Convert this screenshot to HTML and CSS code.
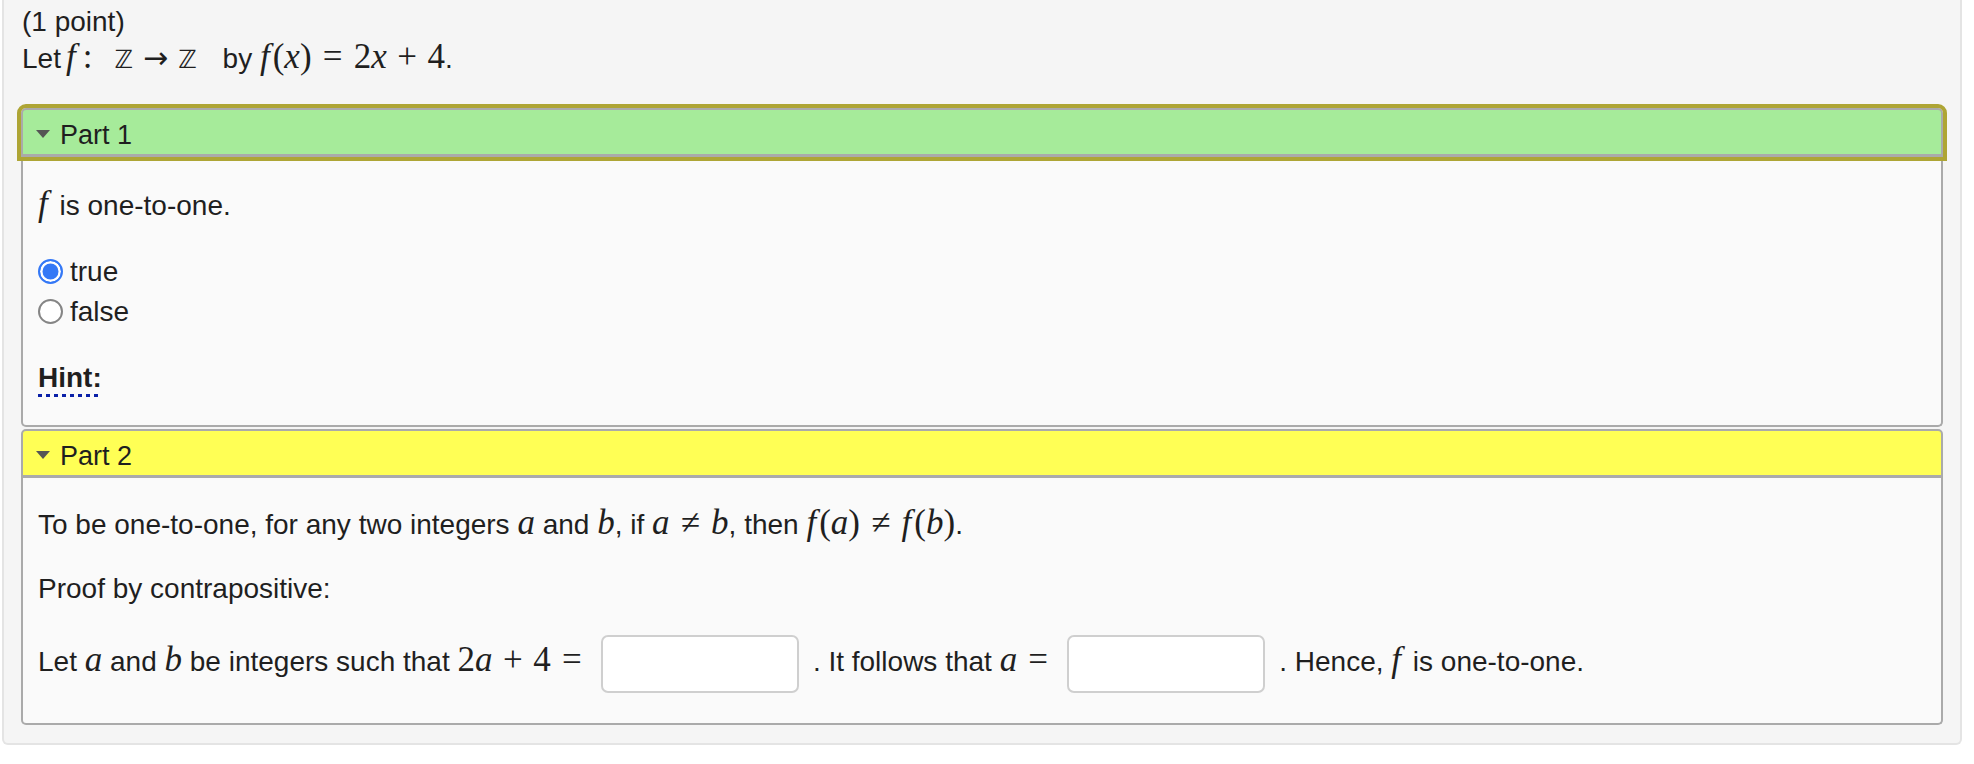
FILE: index.html
```html
<!DOCTYPE html>
<html>
<head>
<meta charset="utf-8">
<link rel="stylesheet" href="styles.css">
</head>
<body>
<div class="problem">
  <p class="line">(1 point)</p>
  <p class="line">Let<span class="m m-first"><i class="mi">f</i><span class="colon">:</span><span class="bb">ℤ</span><span class="arrow">→</span><span class="bb">ℤ</span></span> by <span class="m"><i class="mi fp">f</i>(<i class="mi">x</i>)<span class="rel">=</span>2<i class="mi">x</i><span class="bin">+</span>4</span>.</p>

  <div class="parts">
    <section class="part">
      <div class="part-head head-green"><span class="tri"></span>Part 1</div>
      <div class="part-body body-1">
        <p class="para"><span class="m"><i class="mi mf">f</i></span> is one-to-one.</p>
        <div class="radios">
          <label class="opt"><input class="radio" type="radio" name="p1" checked>true</label>
          <label class="opt"><input class="radio" type="radio" name="p1">false</label>
        </div>
        <p class="para last"><span class="hint">Hint:</span></p>
      </div>
    </section>

    <section class="part">
      <div class="part-head head-yellow"><span class="tri"></span>Part 2</div>
      <div class="part-body body-2">
        <p class="para">To be one-to-one, for any two integers <span class="m"><i class="mi">a</i></span> and <span class="m"><i class="mi">b</i></span>, if <span class="m"><i class="mi">a</i><span class="rel">≠</span><i class="mi">b</i></span>, then <span class="m"><i class="mi fp">f</i>(<i class="mi">a</i>)<span class="rel">≠</span><i class="mi fp">f</i>(<i class="mi">b</i>)</span>.</p>
        <p class="para p-proof">Proof by contrapositive:</p>
        <p class="para last">Let <span class="m"><i class="mi">a</i></span> and <span class="m"><i class="mi">b</i></span> be integers such that <span class="m">2<i class="mi">a</i><span class="bin">+</span>4<span class="rel">=</span></span><input class="ans" type="text">. It follows that <span class="m"><i class="mi">a</i><span class="rel">=</span></span><input class="ans" type="text">. Hence, <span class="m"><i class="mi mf">f</i></span> is one-to-one.</p>
      </div>
    </section>
  </div>
</div>
</body>
</html>
```

FILE: styles.css
```css
html, body {
  margin: 0;
  padding: 0;
  background: #ffffff;
}

body {
  font-family: "Liberation Sans", Arial, sans-serif;
  font-size: 28px;
  line-height: 37px;
  color: #1f1f1f;
}

.problem {
  box-sizing: border-box;
  width: 1960px;
  margin-left: 2px;
  background: #f5f5f5;
  border: 2px solid #e4e4e4;
  border-top: 0;
  border-radius: 0 0 6px 6px;
  padding: 3px 18px 18px 18px;
}

.line {
  margin: 0;
}

.m {
  font-family: "Liberation Serif", "Times New Roman", serif;
  font-size: 35px;
  line-height: 24px;
}

.m-first {
  margin-left: 5px;
  margin-right: 18px;
}

.mi {
  font-style: italic;
}

.mf {
  margin-right: 4px;
}

.fp {
  margin-right: 3px;
}

.rel {
  margin: 0 0.32em;
}

.bin {
  margin: 0 0.3em;
}

.colon {
  margin: 0 22px 0 7px;
}

.arrow {
  font-family: "DejaVu Sans", sans-serif;
  font-size: 30px;
  margin: 0 10px;
}

.bb {
  font-family: "DejaVu Sans", sans-serif;
  font-size: 25px;
}

.parts {
  margin: 31px -1px 0 -1px;
}

.part {
  margin-bottom: 2px;
}

.part:last-child {
  margin-bottom: 0;
}

.part-head {
  border: 2px solid #aaaaaa;
  border-bottom-width: 3px;
  border-radius: 5px 5px 0 0;
  padding: 7px 14px 0 13px;
  height: 37px;
  display: flex;
  align-items: flex-start;
  font-size: 27px;
}

.head-green {
  background: #a6eb9a;
  outline: 4px solid #aea535;
}

.head-yellow {
  background: #ffff55;
}

.tri {
  width: 0;
  height: 0;
  border-left: 7px solid transparent;
  border-right: 7px solid transparent;
  border-top: 8px solid #555555;
  margin: 13px 10px 0 0;
}

.part-body {
  background: #fafafa;
  border: 2px solid #aaaaaa;
  border-top: 0;
  border-radius: 0 0 5px 5px;
  padding: 0 15px;
  display: flow-root;
}

.body-1 {
  padding-top: 2px;
  padding-bottom: 1px;
}

.body-2 {
  padding-bottom: 2px;
}

.para {
  margin: 28px 0 0 0;
}

.para.p-proof {
  margin-top: 27px;
}

.para.last {
  margin-bottom: 28px;
}

.radios {
  margin-top: 27px;
  display: flex;
  flex-direction: column;
}

.opt {
  display: flex;
  align-items: center;
  height: 40px;
}

.radio {
  -webkit-appearance: none;
  appearance: none;
  box-sizing: border-box;
  width: 25px;
  height: 25px;
  margin: 0 7px 0 0;
  border-radius: 50%;
  border: 2px solid #858585;
  background: #ffffff;
}

.radio:checked {
  border-color: #3478f6;
  background: #3478f6;
  box-shadow: inset 0 0 0 2.5px #ffffff;
}

.hint {
  font-weight: bold;
  padding-bottom: 4px;
  background-image: linear-gradient(to right, #0a20a8 50%, transparent 50%);
  background-size: 8px 3px;
  background-repeat: repeat-x;
  background-position: left bottom;
}

.ans {
  box-sizing: border-box;
  width: 198px;
  height: 58px;
  vertical-align: middle;
  border: 2px solid #cfcfcf;
  border-radius: 7px;
  background: #ffffff;
  margin: 0 14px 0 8px;
  padding: 0 8px;
  font: inherit;
}
```
